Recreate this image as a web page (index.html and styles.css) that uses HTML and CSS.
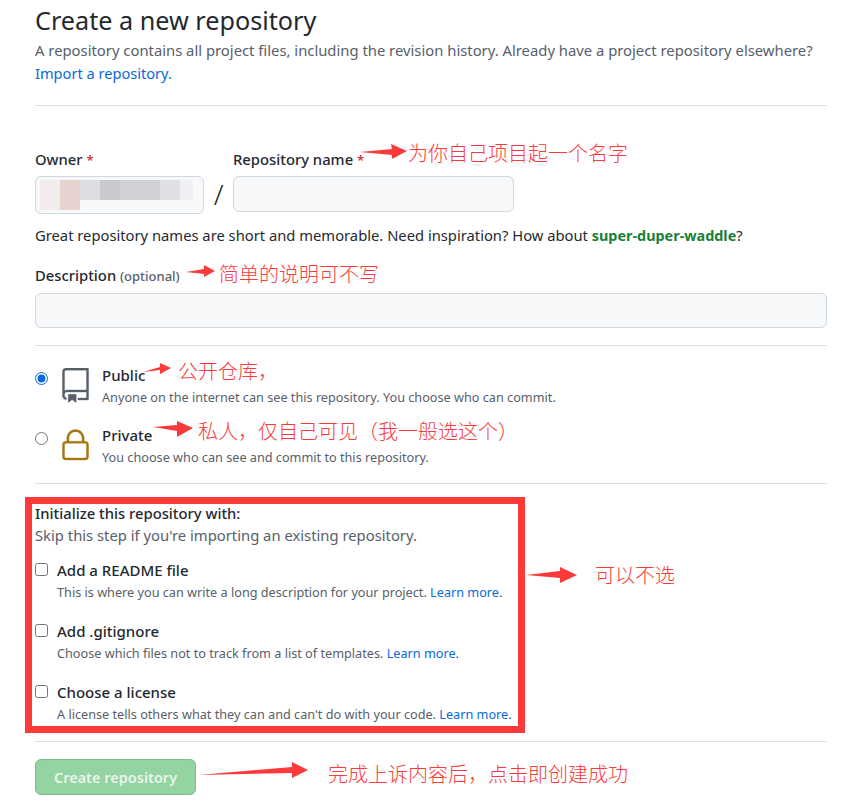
FILE: index.html
```html
<!DOCTYPE html>
<html>
<head>
  <meta charset="utf-8">
  <link rel="stylesheet" href="styles.css">
</head>
<body>
  <div class="page">
    <div class="subhead">
      <h1 class="title">Create a new repository</h1>
      <p class="lead">A repository contains all project files, including the revision history. Already have a project repository elsewhere?</p>
      <a class="link" href="#">Import a repository.</a>
    </div>

    <div class="name-row">
      <div class="owner">
        <label class="label">Owner <span class="req">*</span></label>
        <div class="input owner-input">
          <span class="cell c1"></span><span class="cell c2"></span><span class="cell c3"></span><span class="cell c4"></span><span class="cell c5"></span><span class="cell c6"></span><span class="cell c7"></span>
        </div>
      </div>
      <div class="slash">/</div>
      <div class="repo">
        <label class="label">Repository name <span class="req">*</span></label>
        <div class="input repo-input"></div>
      </div>
    </div>
    <p class="note">Great repository names are short and memorable. Need inspiration? How about <a class="suggest" href="#">super-duper-waddle</a>?</p>

    <label class="label desc-label">Description <span class="optional">(optional)</span></label>
    <div class="input desc-input"></div>

    <hr class="rule rule-vis">

    <div class="vis-row vis-public">
      <input class="radio" type="radio" name="vis" checked>
      <svg class="vis-icon icon-repo" viewBox="0 0 24 24"><path fill-rule="evenodd" d="M3 2.75A2.75 2.75 0 015.75 0h14.5a.75.75 0 01.75.75v20.5a.75.75 0 01-.75.75h-6a.75.75 0 010-1.5h5.25v-4H6A1.5 1.5 0 004.5 18v.75c0 .716.43 1.334 1.05 1.605a.75.75 0 01-.6 1.374A3.25 3.25 0 013 18.75v-16zM19.5 1.5V15H6c-.546 0-1.059.146-1.5.401V2.75c0-.69.56-1.25 1.25-1.25H19.5z"/><path d="M7 18.25a.25.25 0 01.25-.25h5a.25.25 0 01.25.25v5.01a.25.25 0 01-.397.201l-2.206-1.604a.25.25 0 00-.294 0L7.397 23.46a.25.25 0 01-.397-.2v-5.01z"/></svg>
      <div class="vis-text">
        <div class="opt-name">Public</div>
        <div class="opt-note">Anyone on the internet can see this repository. You choose who can commit.</div>
      </div>
    </div>
    <div class="vis-row vis-private">
      <input class="radio" type="radio" name="vis">
      <svg class="vis-icon icon-lock" viewBox="0 0 24 24"><path fill-rule="evenodd" d="M6 9V7.25C6 3.845 8.503 1 12 1s6 2.845 6 6.25V9h.5a2.5 2.5 0 012.5 2.5v8a2.5 2.5 0 01-2.5 2.5h-13A2.5 2.5 0 013 19.5v-8A2.5 2.5 0 015.5 9H6zm1.5-1.75C7.5 4.58 9.422 2.5 12 2.5c2.578 0 4.5 2.08 4.5 4.75V9h-9V7.25zm-3 4.25a1 1 0 011-1h13a1 1 0 011 1v8a1 1 0 01-1 1h-13a1 1 0 01-1-1v-8z"/></svg>
      <div class="vis-text">
        <div class="opt-name">Private</div>
        <div class="opt-note">You choose who can see and commit to this repository.</div>
      </div>
    </div>

    <hr class="rule">

    <div class="init-title">Initialize this repository with:</div>
    <div class="init-skip">Skip this step if you're importing an existing repository.</div>

    <div class="check-row">
      <input class="check" type="checkbox">
      <div>
        <div class="opt-name">Add a README file</div>
        <div class="opt-note">This is where you can write a long description for your project. <a class="link" href="#">Learn more.</a></div>
      </div>
    </div>
    <div class="check-row">
      <input class="check" type="checkbox">
      <div>
        <div class="opt-name">Add .gitignore</div>
        <div class="opt-note">Choose which files not to track from a list of templates. <a class="link" href="#">Learn more.</a></div>
      </div>
    </div>
    <div class="check-row">
      <input class="check" type="checkbox">
      <div>
        <div class="opt-name">Choose a license</div>
        <div class="opt-note">A license tells others what they can and can't do with your code. <a class="link" href="#">Learn more.</a></div>
      </div>
    </div>

    <hr class="rule rule-submit">

    <button class="create-button" disabled>Create repository</button>
  </div>

  <!-- red annotations drawn on top of the screenshot -->
  <div class="red-box"></div>
  <svg class="arrows" viewBox="0 0 842 801">
    <polygon points="360,152 392,149 391,144 407,151 392,159 392,155"/>
    <polygon points="186,272 204,269 204,265 215,271 204,277 204,274"/>
    <polygon points="143,372 160,367 160,363 171,368 160,374 160,370"/>
    <polygon points="153,427 177,425 177,421 193,428 177,437 177,431"/>
    <polygon points="526,575 560,571 560,567 577,575 560,583 560,578"/>
    <polygon points="198,775 292,767 292,762 308,770 292,778 292,773"/>
  </svg>
  <span class="note-red n-name">为你自己项目起一个名字</span>
  <span class="note-red n-desc">简单的说明可不写</span>
  <span class="note-red n-public">公开仓库，</span>
  <span class="note-red n-private">私人，仅自己可见（我一般选这个）</span>
  <span class="note-red n-init">可以不选</span>
  <span class="note-red n-create">完成上诉内容后，点击即创建成功</span>
</body>
</html>
```

FILE: styles.css
```css
html, body {
  margin: 0;
  height: 801px;
  overflow: hidden;
  background: #fff;
}

body {
  position: relative;
  font-family: "Noto Sans", "Noto Sans CJK SC", sans-serif;
  color: #24292f;
}

.page {
  width: 792px;
  padding-left: 35px;
}

.subhead {
  height: 105px;
  border-bottom: 1px solid #d8dee4;
}

.title {
  margin: 0;
  padding-top: 2px;
  font-size: 25.2px;
  line-height: 36px;
  font-weight: 400;
}

.lead {
  margin: 0;
  padding-top: 1px;
  font-size: 14.82px;
  line-height: 22px;
  color: #57606a;
}

.link {
  font-size: inherit;
  color: #0969da;
  text-decoration: none;
}

.subhead .link {
  display: block;
  font-size: 14.6px;
  line-height: 22px;
  margin-top: 1px;
}

.label {
  display: block;
  font-size: 14.8px;
  font-weight: 500;
  line-height: 20px;
}

.req {
  font-size: 13px;
  color: #cf222e;
}

.optional {
  font-size: 13px;
  color: #57606a;
}

.input {
  box-sizing: border-box;
  background: #f6f8fa;
  border: 1px solid #d0d7de;
  border-radius: 6px;
}

.name-row {
  display: flex;
  margin-top: 43px;
}

.owner-input {
  display: flex;
  align-items: flex-start;
  width: 169px;
  height: 38px;
  margin-top: 6px;
  padding: 3px 0 0 4px;
}

.cell {
  width: 20px;
  height: 20px;
}

.c1 { background: #f3eced; height: 30px; }
.c2 { background: #e6d3cf; height: 30px; }
.c3 { background: #dcdde0; }
.c4 { background: #c9cacc; }
.c5 { background: #d0d2d5; width: 40px; }
.c6 { background: #dfe0e3; }
.c7 { background: #eef0f2; width: 13px; }

.slash {
  width: 29px;
  padding-top: 27px;
  text-align: center;
  font-size: 28px;
  font-weight: 300;
  line-height: 36px;
}

.repo-input {
  width: 281px;
  height: 36px;
  margin-top: 6px;
}

.note {
  margin: 10px 0 0;
  font-size: 14.75px;
  line-height: 22px;
}

.suggest {
  color: #1a7f37;
  font-size: 14.4px;
  font-weight: 700;
  text-decoration: none;
}

.desc-label {
  margin-top: 18px;
}

.desc-input {
  width: 792px;
  height: 35px;
  margin-top: 7px;
}

.rule {
  width: 792px;
  margin: 0;
  border: 0;
  border-top: 1px solid #d8dee4;
}

.rule-vis {
  margin-top: 17px;
}

.vis-row {
  display: flex;
  align-items: flex-start;
}

.vis-public {
  margin-top: 19px;
  height: 57px;
}

.vis-private {
  height: 61px;
}

.radio {
  width: 13px;
  height: 13px;
  margin: 7px 0 0;
  accent-color: #0969da;
}

.vis-private .radio {
  margin-top: 10px;
}

.vis-icon {
  width: 35px;
  height: 35px;
  margin: 3px 9px 0 10px;
  flex: none;
  stroke-width: 0.2;
}

.icon-repo {
  fill: #57606a;
  stroke: #57606a;
}

.icon-lock {
  fill: #a5750f;
  stroke: #a5750f;
  margin-top: 5.5px;
}

.opt-name {
  font-size: 15px;
  font-weight: 500;
  line-height: 20px;
}

.opt-note {
  font-size: 12.68px;
  line-height: 18px;
  margin-top: 3px;
  color: #57606a;
}

.opt-note .link {
  color: #0969da;
}

.vis-private .vis-text {
  padding-top: 3px;
}

.init-title {
  margin-top: 19px;
  font-size: 14.8px;
  font-weight: 500;
  line-height: 20px;
}

.init-skip {
  margin-top: 2px;
  font-size: 14.8px;
  line-height: 20px;
  color: #57606a;
}

.check-row {
  display: flex;
  align-items: flex-start;
  gap: 9px;
  height: 61px;
}

.init-skip + .check-row {
  margin-top: 15px;
}

.check {
  width: 13px;
  height: 13px;
  margin: 3px 0 0;
}

.rule-submit {
  margin-top: -2px;
}

.create-button {
  display: block;
  width: 161px;
  height: 36px;
  margin-top: 17px;
  padding: 0;
  font-family: inherit;
  font-size: 14.5px;
  font-weight: 600;
  color: rgba(255, 255, 255, 0.8);
  background: #94d3a2;
  border: 1px solid #7fb98c;
  border-radius: 6px;
}

/* annotations */
.red-box {
  position: absolute;
  left: 25px;
  top: 497px;
  width: 486px;
  height: 222px;
  border: 7px solid #fc3a3a;
}

.arrows {
  position: absolute;
  left: 0;
  top: 0;
  width: 842px;
  height: 801px;
  fill: #fc3a3a;
}

.note-red {
  position: absolute;
  font-family: "Noto Sans CJK SC", sans-serif;
  font-size: 20px;
  font-weight: 300;
  line-height: 24px;
  color: #fc3a3a;
  white-space: nowrap;
}

.n-name { left: 408px; top: 141px; }
.n-desc { left: 219px; top: 262px; }
.n-public { left: 178px; top: 359px; }
.n-private { left: 198px; top: 419px; }
.n-init { left: 595px; top: 563px; }
.n-create { left: 328px; top: 762px; }
```
